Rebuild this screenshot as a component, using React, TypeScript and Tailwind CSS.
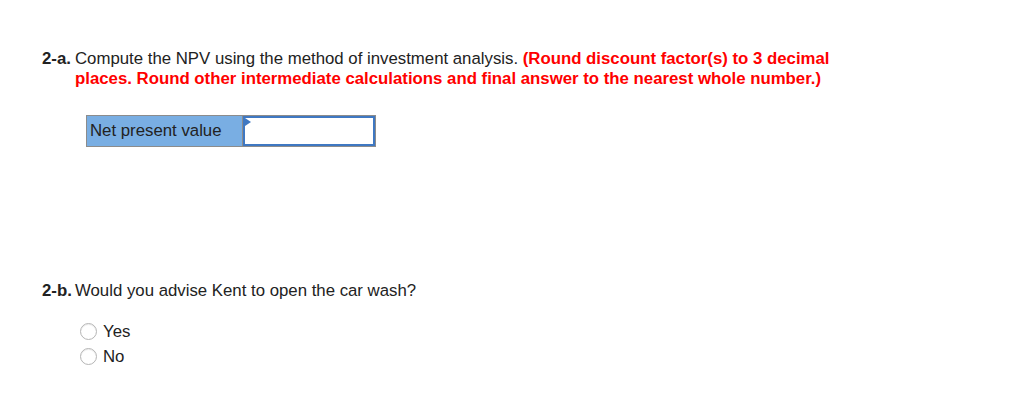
import React from 'react';

function Radio({ label }: { label: string }) {
    return (
        <label className="flex items-center h-[25px]">
            <span className="w-[17px] h-[17px] rounded-full border border-[#b5b5b5] bg-white shadow-[inset_0_1px_1px_rgba(0,0,0,0.08)]" />
            <span className="ml-[6px]">{label}</span>
        </label>
    );
}

export default function App() {
    return (
        <div className="w-[1024px] h-[405px] bg-white text-[#222] text-[16.8px] leading-[20px] font-['Liberation_Sans',Arial,sans-serif] pt-[49px] pl-[42px]">
            <div className="flex">
                <span className="font-bold w-[33px] shrink-0">2-a.</span>
                <p className="w-[770px]">
                    Compute the NPV using the method of investment analysis.{' '}
                    <b className="text-[#f00]">(Round discount factor(s) to 3 decimal places. Round other intermediate calculations and final answer to the nearest whole number.)</b>
                </p>
            </div>

            <div className="ml-[44px] mt-[26px] flex w-[290px] h-[32px] border border-[#8c8c8c]">
                <div className="w-[156px] bg-[#79aee3] border-r border-[#8c8c8c] pl-[3px] flex items-center text-[#222]">
                    Net present value
                </div>
                <div className="relative flex-1 border-2 border-[#3f78c2] bg-white">
                    <span className="absolute left-0 top-0 w-0 h-0 border-t-[4px] border-b-[4px] border-l-[6px] border-t-transparent border-b-transparent border-l-[#3f78c2]" />
                </div>
            </div>

            <div className="flex mt-[134px]">
                <span className="font-bold w-[33px] shrink-0">2-b.</span>
                <p>Would you advise Kent to open the car wash?</p>
            </div>

            <div className="ml-[38px] mt-[18px]">
                <Radio label="Yes" />
                <Radio label="No" />
            </div>
        </div>
    );
}
